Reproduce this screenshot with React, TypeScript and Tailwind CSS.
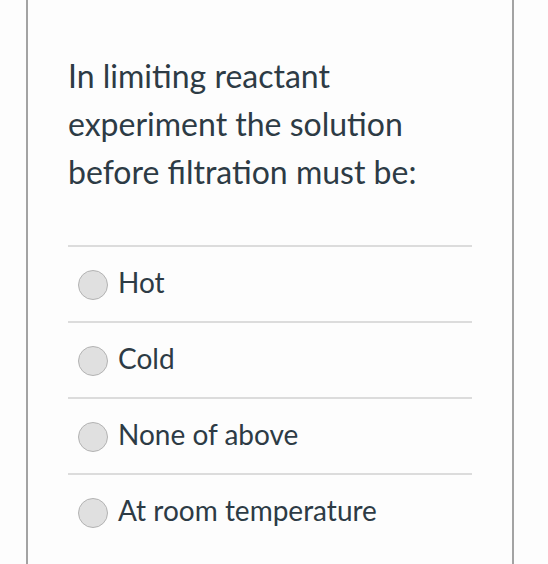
const options = ['Hot', 'Cold', 'None of above', 'At room temperature'];

export default function App() {
  return (
    <div className="min-h-[564px] bg-[#fdfdfd] font-['Lato',sans-serif] text-[#2d3b45]">
      <div className="ml-[26px] w-[488px] min-h-[564px] border-x-2 border-[#a3a3a3] px-[40px] pt-[52px]">
        <p className="text-[32px] leading-[48px]">
          In limiting reactant experiment the solution before filtration must be:
        </p>
        <div className="mt-[49px]">
          {options.map((opt) => (
            <div key={opt} className="flex h-[76px] items-center border-t-2 border-[#dcdcdc] pl-[10px]">
              <span className="mt-[2px] h-[30px] w-[30px] rounded-full border border-[#b3b3b3] bg-[#e0e0e0]" />
              <span className="ml-[10px] pb-[5px] text-[28px]">{opt}</span>
            </div>
          ))}
        </div>
      </div>
    </div>
  );
}
